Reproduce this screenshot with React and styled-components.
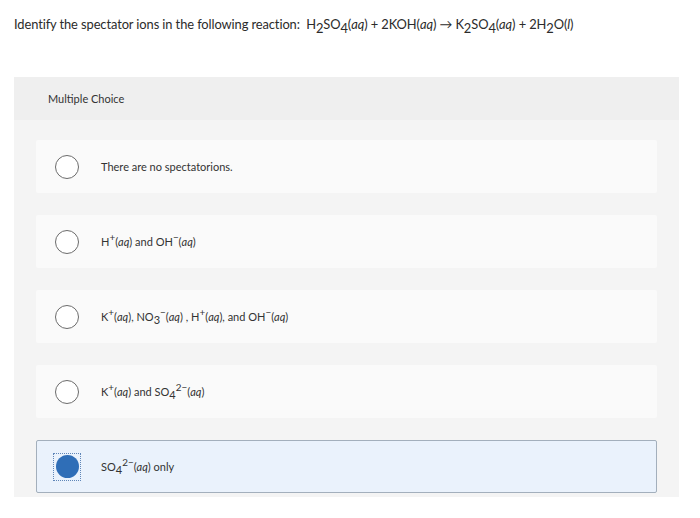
import React from "react";
import styled, { createGlobalStyle, css } from "styled-components";

const Global = createGlobalStyle`
  html, body { margin: 0; padding: 0; background: #ffffff; }
  body { font-family: "Lato", "Open Sans", "Liberation Sans", sans-serif; color: #333; }
`;

const Page = styled.div`
  width: 700px;
  height: 518px;
  box-sizing: border-box;
  padding: 15px 21px 0 14px;
  display: flex;
  flex-direction: column;
`;

const Question = styled.div`
  font-size: 12.9px;
  line-height: 18px;
  color: #2b2b2b;
  white-space: nowrap;
  letter-spacing: -0.1px;
`;

const Panel = styled.div`
  margin-top: 44px;
  background: #f4f4f4;
  padding-bottom: 4px;
`;

const PanelHeader = styled.div`
  height: 43px;
  background: #efefef;
  display: flex;
  align-items: center;
  padding-left: 34px;
  font-size: 11px;
  color: #333;
`;

const Options = styled.div`
  display: flex;
  flex-direction: column;
  gap: 22px;
  padding: 20px 22px 0;
`;

const Card = styled.div`
  height: 53px;
  box-sizing: border-box;
  display: flex;
  align-items: center;
  padding-left: 16px;
  background: #fafafa;
  border: 1px solid transparent;
  border-radius: 2px;
  ${(p) =>
    p.$selected &&
    css`
      background: #eaf2fc;
      border-color: #a3afbc;
    `}
`;

const RadioFrame = styled.span`
  width: 28px;
  height: 28px;
  box-sizing: border-box;
  flex: none;
  display: flex;
  align-items: center;
  justify-content: center;
  border: 1px dotted ${(p) => (p.$focused ? "#5f86b8" : "transparent")};
`;

const Radio = styled.span`
  width: 24px;
  height: 24px;
  box-sizing: border-box;
  border-radius: 50%;
  flex: none;
  border: 1.5px solid #6b6b6b;
  background: #fff;
  ${(p) =>
    p.$checked &&
    css`
      width: 23px;
      height: 23px;
      border: none;
      background: #2f6eb7;
    `}
`;

const Label = styled.span`
  margin-left: 20px;
  font-size: 11px;
  color: #333;
  white-space: nowrap;
`;

const Sub = styled.sub`
  font-size: 1em;
  vertical-align: -0.3em;
  line-height: 0;
`;

const Sup = styled.sup`
  font-size: 0.9em;
  vertical-align: 0.55em;
  line-height: 0;
`;

const Aq = styled.i`
  font-style: italic;
`;

const aq = (
  <>
    (<Aq>aq</Aq>)
  </>
);

const options = [
  { key: "a", content: <>There are no spectatorions.</> },
  {
    key: "b",
    content: (
      <>
        H<Sup>+</Sup>{aq} and OH<Sup>−</Sup>{aq}
      </>
    ),
  },
  {
    key: "c",
    content: (
      <>
        K<Sup>+</Sup>{aq}, NO<Sub>3</Sub>
        <Sup>−</Sup>{aq} , H<Sup>+</Sup>{aq}, and OH<Sup>−</Sup>{aq}
      </>
    ),
  },
  {
    key: "d",
    content: (
      <>
        K<Sup>+</Sup>{aq} and SO<Sub>4</Sub>
        <Sup>2−</Sup>{aq}
      </>
    ),
  },
  {
    key: "e",
    selected: true,
    content: (
      <>
        SO<Sub>4</Sub>
        <Sup>2−</Sup>{aq} only
      </>
    ),
  },
];

export default function App() {
  return (
    <>
      <Global />
      <Page>
        <Question>
          Identify the spectator ions in the following reaction:&nbsp; H<Sub>2</Sub>SO
          <Sub>4</Sub>{aq} + 2KOH{aq} → K<Sub>2</Sub>SO<Sub>4</Sub>{aq} + 2H<Sub>2</Sub>O(
          <Aq>l</Aq>)
        </Question>
        <Panel>
          <PanelHeader>Multiple Choice</PanelHeader>
          <Options>
            {options.map((o) => (
              <Card key={o.key} $selected={o.selected}>
                <RadioFrame $focused={o.selected}>
                  <Radio $checked={o.selected} />
                </RadioFrame>
                <Label>{o.content}</Label>
              </Card>
            ))}
          </Options>
        </Panel>
      </Page>
    </>
  );
}
